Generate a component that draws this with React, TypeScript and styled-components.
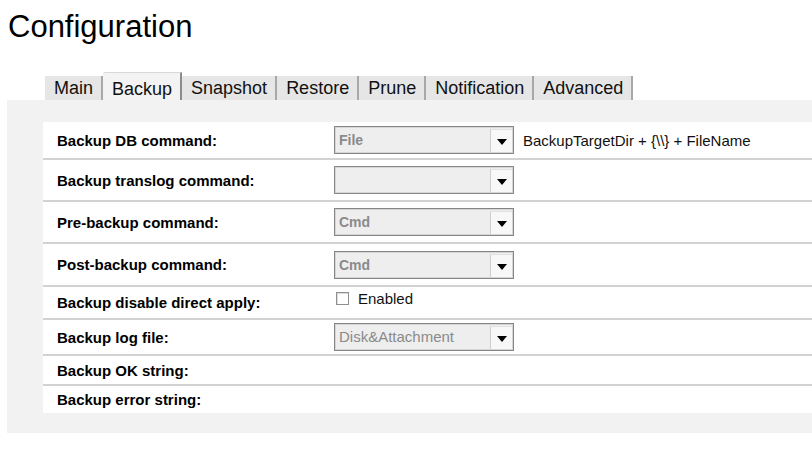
import styled, { createGlobalStyle } from 'styled-components';

const GlobalStyle = createGlobalStyle`
  html, body {
    margin: 0;
    padding: 0;
    background: #ffffff;
    overflow: hidden;
  }
  body {
    font-family: "Liberation Sans", Arial, sans-serif;
    color: #000000;
  }
`;

const Page = styled.div`
  padding-left: 7px;
`;

const Title = styled.h1`
  margin: 9px 0 0 1px;
  font-size: 31px;
  font-weight: normal;
  line-height: 35px;
`;

const TabBar = styled.div`
  display: flex;
  align-items: flex-end;
  margin: 28px 0 0 38px;
  height: 28px;
`;

const Tab = styled.div<{ $active?: boolean }>`
  height: ${(p) => (p.$active ? '28px' : '24px')};
  padding: ${(p) => (p.$active ? '4px 8px 0 9px' : '0 8px 0 9px')};
  box-sizing: border-box;
  line-height: 24px;
  font-size: 18px;
  background: ${(p) => (p.$active ? '#f3f3f3' : '#e6e6e6')};
  border-right: 2px solid ${(p) => (p.$active ? '#8c8c8c' : '#a8a8a8')};
  border-top: ${(p) => (p.$active ? '1px solid #d8d8d8' : 'none')};
  border-top-left-radius: ${(p) => (p.$active ? '3px' : '0')};
  color: #111111;
  white-space: nowrap;
`;

const Panel = styled.div`
  background: #f2f2f2;
  padding: 22px 0 20px 36px;
`;

const Table = styled.div`
  background: #ffffff;
  display: flex;
  flex-direction: column;
`;

const Row = styled.div<{ $h: number; $first?: boolean }>`
  display: flex;
  align-items: center;
  height: ${(p) => p.$h}px;
  box-sizing: border-box;
  border-top: ${(p) => (p.$first ? 'none' : '2px solid #d2d2d2')};
`;

const Label = styled.div`
  width: 291px;
  padding-left: 14px;
  box-sizing: border-box;
  font-size: 15px;
  font-weight: bold;
  flex-shrink: 0;
`;

const Value = styled.div<{ $top?: boolean }>`
  display: flex;
  align-items: center;
  gap: 9px;
  align-self: ${(p) => (p.$top ? 'flex-start' : 'center')};
  padding-top: ${(p) => (p.$top ? '3px' : '0')};
  font-size: 15px;
`;

const Select = styled.div`
  display: flex;
  width: 180px;
  height: 28px;
  box-sizing: border-box;
  border: 1px solid #858585;
  box-shadow: inset 0 0 0 1px #d6d6d6;
  background: #eeeeee;
`;

const SelectText = styled.div<{ $bold?: boolean }>`
  flex: 1;
  padding-left: 4px;
  line-height: 26px;
  font-size: ${(p) => (p.$bold ? '14px' : '15px')};
  font-weight: ${(p) => (p.$bold ? 'bold' : 'normal')};
  color: #8a8a8a;
  overflow: hidden;
  white-space: nowrap;
`;

const Arrow = styled.div`
  width: 21px;
  margin: 2px 1px 1px 0;
  background: #f8f8f8;
  border-left: 1px solid #cfcfcf;
  border-top: 1px solid #e2e2e2;
  display: flex;
  align-items: center;
  justify-content: center;
  &::after {
    content: '';
    margin-top: 2px;
    border-left: 5px solid transparent;
    border-right: 5px solid transparent;
    border-top: 6px solid #000000;
  }
`;

const CheckLabel = styled.label`
  display: flex;
  align-items: center;
  gap: 9px;
  margin-left: 2px;
  font-size: 15px;
  color: #111111;
`;

const CheckBox = styled.span`
  width: 13px;
  height: 13px;
  box-sizing: border-box;
  border: 1px solid #8f8f8f;
  background: #ffffff;
  box-shadow: inset 1px 1px 0 #dcdcdc;
`;

const Hint = styled.span`
  color: #111111;
`;

const tabs = ['Main', 'Backup', 'Snapshot', 'Restore', 'Prune', 'Notification', 'Advanced'];

const DropDown = ({ value, bold }: { value: string; bold?: boolean }) => (
  <Select>
    <SelectText $bold={bold}>{value}</SelectText>
    <Arrow />
  </Select>
);

export default function App() {
  return (
    <>
      <GlobalStyle />
      <Page>
        <Title>Configuration</Title>
        <TabBar>
          {tabs.map((t) => (
            <Tab key={t} $active={t === 'Backup'}>
              {t}
            </Tab>
          ))}
        </TabBar>
        <Panel>
          <Table>
            <Row $h={36} $first>
              <Label>Backup DB command:</Label>
              <Value>
                <DropDown value="File" bold />
                <Hint>BackupTargetDir + {'{\\\\}'} + FileName</Hint>
              </Value>
            </Row>
            <Row $h={42}>
              <Label>Backup translog command:</Label>
              <Value>
                <DropDown value="" />
              </Value>
            </Row>
            <Row $h={42}>
              <Label>Pre-backup command:</Label>
              <Value>
                <DropDown value="Cmd" bold />
              </Value>
            </Row>
            <Row $h={43}>
              <Label>Post-backup command:</Label>
              <Value>
                <DropDown value="Cmd" bold />
              </Value>
            </Row>
            <Row $h={33}>
              <Label>Backup disable direct apply:</Label>
              <Value $top>
                <CheckLabel>
                  <CheckBox />
                  Enabled
                </CheckLabel>
              </Value>
            </Row>
            <Row $h={36}>
              <Label>Backup log file:</Label>
              <Value>
                <DropDown value="Disk&Attachment" />
              </Value>
            </Row>
            <Row $h={30}>
              <Label>Backup OK string:</Label>
            </Row>
            <Row $h={29}>
              <Label>Backup error string:</Label>
            </Row>
          </Table>
        </Panel>
      </Page>
    </>
  );
}
